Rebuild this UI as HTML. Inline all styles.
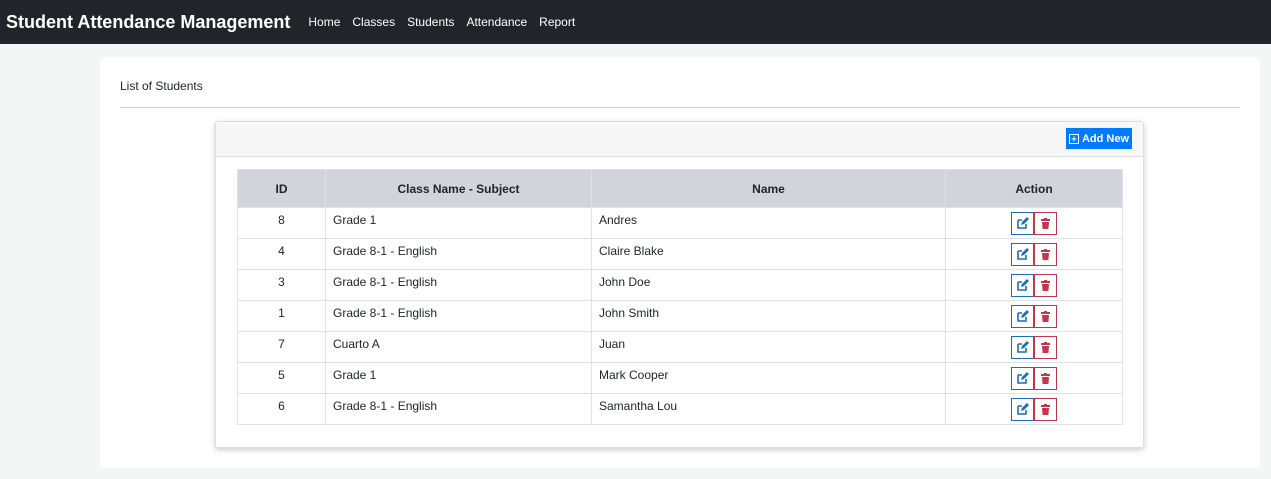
<!DOCTYPE html><html><head><style>
*{box-sizing:border-box}body{margin:0;background:#f4f6f6;font-family:"Liberation Sans",sans-serif;font-size:12px;color:#212529;width:1271px;height:479px;overflow:hidden;position:relative}
.nav{height:44px;background:#212529;color:#fff;display:flex;align-items:center;padding-left:6px}
.brand{font-size:18px;font-weight:bold;margin-right:18px}
.nav a{font-size:12px;margin-right:12px;color:#fff}
.card{position:absolute;left:100px;top:57px;width:1160px;height:411px;background:#fff;border-radius:4px}
.title{position:absolute;left:20px;top:22px;font-size:12px}
.hr{position:absolute;left:20px;right:20px;top:50px;border-top:1px solid #ccc}
.inner{position:absolute;left:115px;top:64px;width:929px;height:327px;border:1px solid #ddd;border-radius:3px;box-shadow:0 2px 6px rgba(0,0,0,.2);background:#fff}
.ih{height:35px;background:#f7f7f7;border-bottom:1px solid #ddd;position:relative}
.add{position:absolute;left:850px;top:6px;width:66px;height:21px;background:#007bff;color:#fff;font-weight:bold;font-size:11px;display:flex;align-items:center;justify-content:center;gap:3px}
table{position:absolute;left:21px;top:47px;border-collapse:collapse;width:886px}
td,th{border:1px solid #dee2e6;height:31px;padding:0 7px}
td{padding-bottom:6px}
td.a{padding-bottom:0}
th{background:#d1d5db;height:38px;font-size:12px}
td:first-child{text-align:center}
.b{display:inline-block;width:23px;height:23px;vertical-align:middle;position:relative}
.e{border:1px solid #1a6fb5}.d{border:1px solid #c0394b}
</style></head><body>
<div class="nav"><span class="brand">Student Attendance Management</span><a>Home</a><a>Classes</a><a>Students</a><a>Attendance</a><a>Report</a></div>
<div class="card"><div class="title">List of Students</div><div class="hr"></div>
<div class="inner"><div class="ih"><div class="add"><svg width="10" height="10" viewBox="0 0 10 10"><rect x=".5" y=".5" width="9" height="9" fill="none" stroke="#fff"/><path d="M5 2.5v5M2.5 5h5" stroke="#fff"/></svg>Add New</div></div>
<table><tr><th style="width:88px">ID</th><th style="width:266px">Class Name - Subject</th><th style="width:354px">Name</th><th>Action</th></tr>
<tbody id="tb"></tbody></table></div></div>
<script>
var r=[[8,"Grade 1","Andres"],[4,"Grade 8-1 - English","Claire Blake"],[3,"Grade 8-1 - English","John Doe"],[1,"Grade 8-1 - English","John Smith"],[7,"Cuarto A","Juan"],[5,"Grade 1","Mark Cooper"],[6,"Grade 8-1 - English","Samantha Lou"]];
var ed='<span class="b e"><svg width="21" height="21" viewBox="0 0 21 21"><path d="M6 7h4M6 7v8h8v-4" fill="none" stroke="#1a6fb5" stroke-width="1.6"/><path d="M9 12l1-3 5-5 2 2-5 5z" fill="#1a6fb5"/></svg></span>';
var dl='<span class="b d"><svg width="21" height="21" viewBox="0 0 21 21"><rect x="6" y="6" width="9" height="2" fill="#c0394b"/><rect x="9" y="5" width="3" height="1.5" fill="#c0394b"/><path d="M7 9h7l-.6 7h-5.8z" fill="#c0394b"/></svg></span>';
document.getElementById('tb').innerHTML=r.map(x=>'<tr><td>'+x[0]+'</td><td>'+x[1]+'</td><td>'+x[2]+'</td><td class="a" style="text-align:center">'+ed+dl+'</td></tr>').join('');
</script></body></html>
